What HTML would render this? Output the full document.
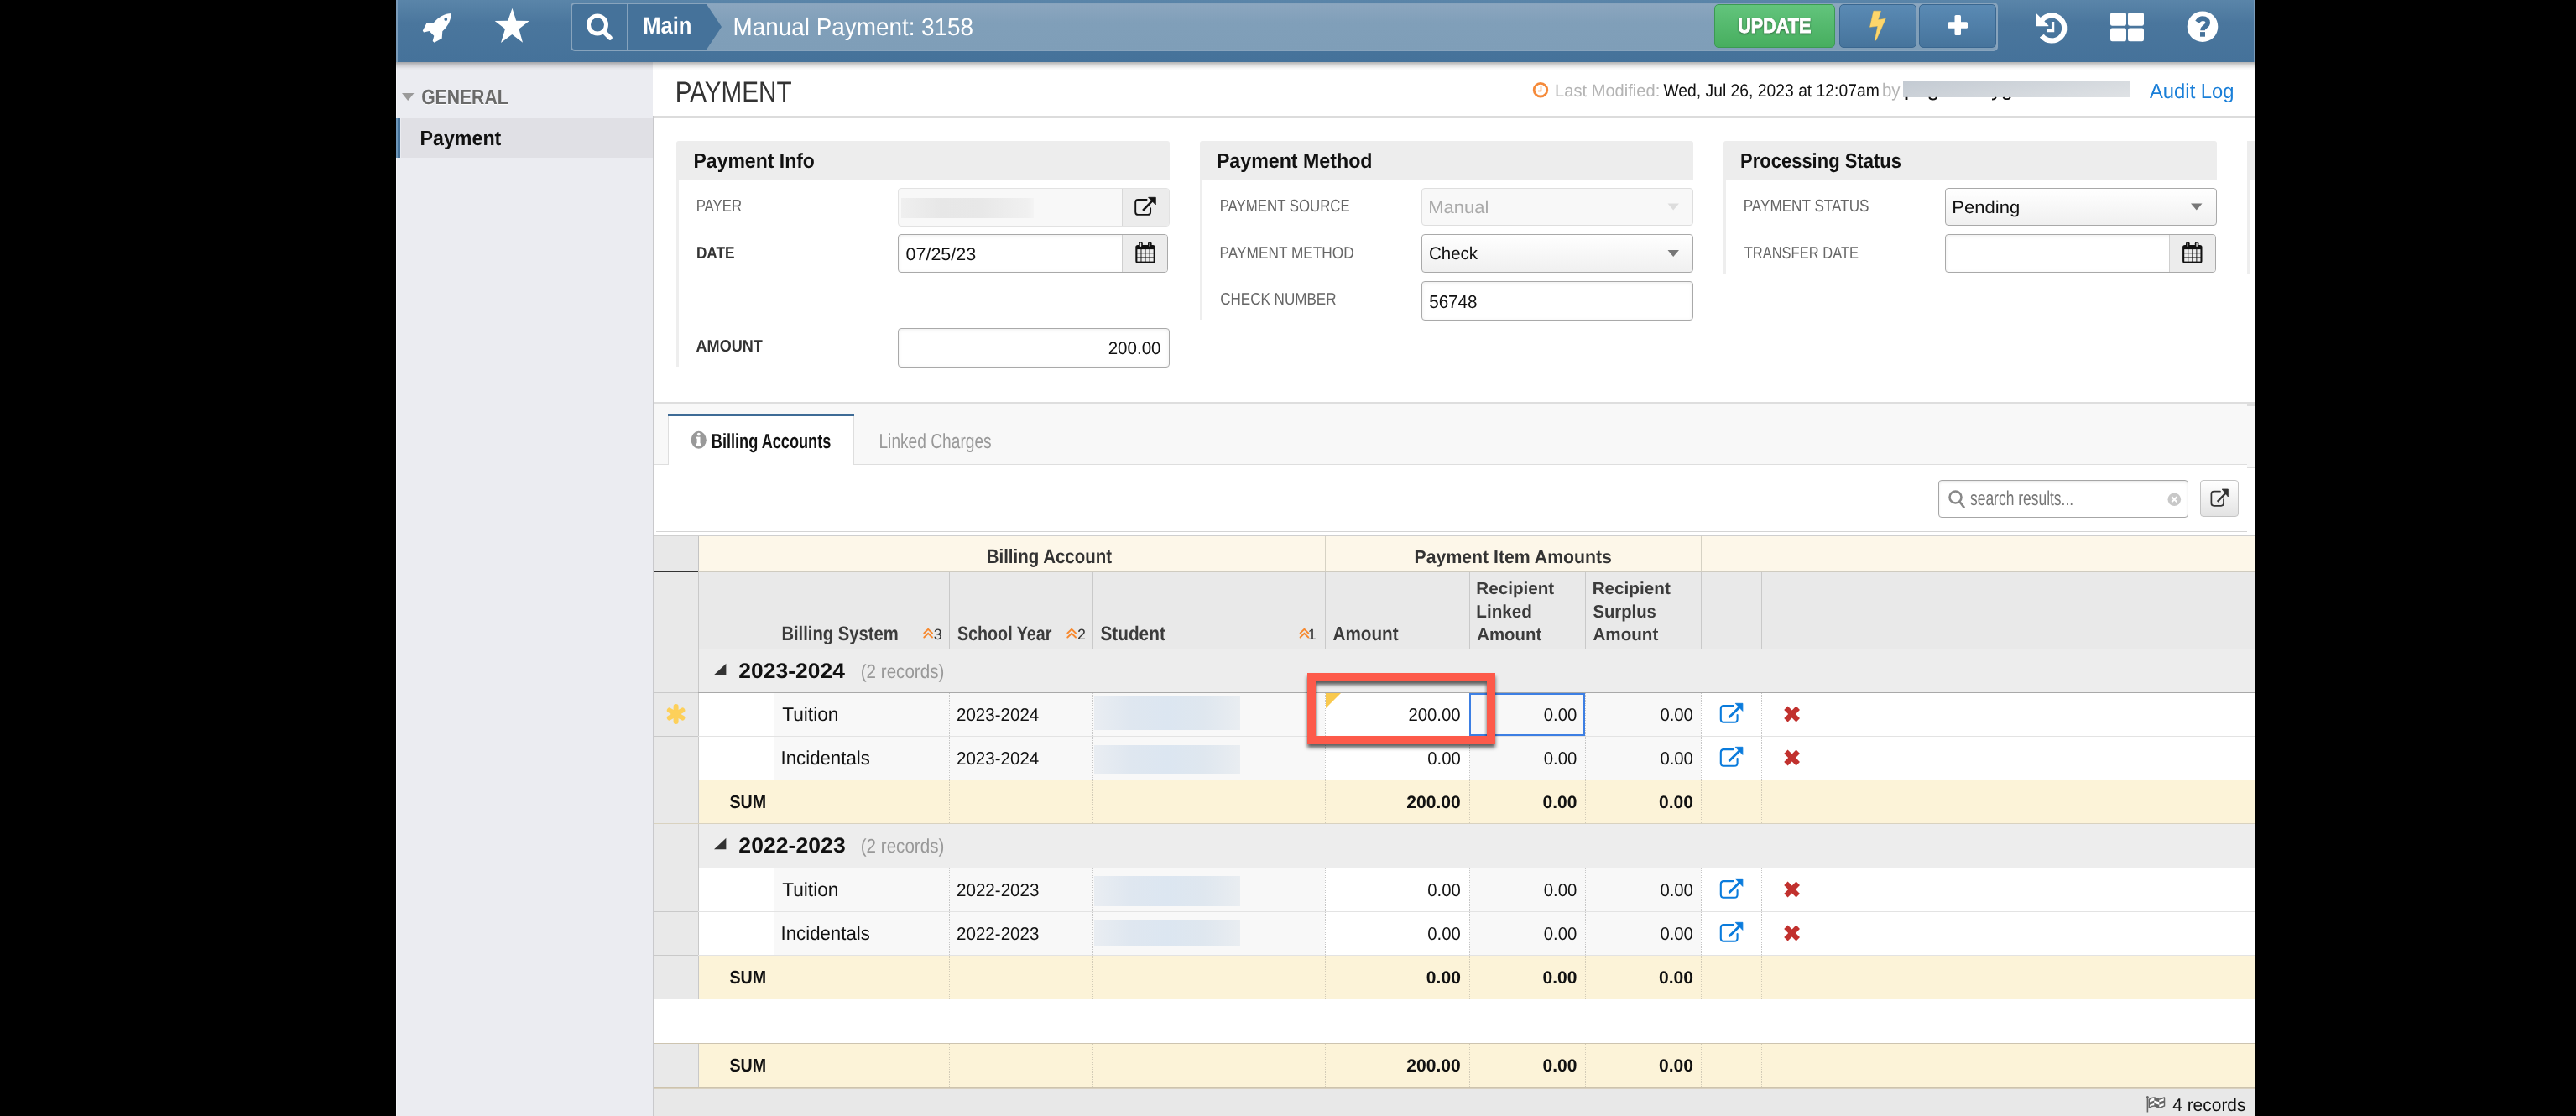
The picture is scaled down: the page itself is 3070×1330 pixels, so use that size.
<!DOCTYPE html>
<html><head><meta charset="utf-8">
<style>
html,body{margin:0;padding:0;}
body{width:3070px;height:1330px;background:#000;position:relative;overflow:hidden;font-family:"Liberation Sans",sans-serif;}
.a{position:absolute;box-sizing:border-box;}
svg{position:absolute;left:0;top:0;will-change:transform;}
text{font-family:"Liberation Sans",sans-serif;white-space:pre;text-rendering:geometricPrecision;}
</style></head><body>
<div class="a" style="left:472px;top:0px;width:2216px;height:1330px;background:#fff;"></div>
<div class="a" style="left:472px;top:74px;width:306px;height:1256px;background:#ebecf1;"></div>
<div class="a" style="left:778px;top:138px;width:1px;height:1192px;background:#c9c9cc;"></div>
<div class="a" style="left:472px;top:141px;width:306px;height:47px;background:#e0e0e5;"></div>
<div class="a" style="left:472px;top:74px;width:1px;height:1256px;background:#f6f6f9;"></div>
<div class="a" style="left:472px;top:141px;width:5px;height:47px;background:linear-gradient(90deg,#7098bb 0,#6a93b6 2px,#45729a 2px);"></div>
<div class="a" style="left:477px;top:141px;width:1px;height:47px;background:#ebecf1;"></div>
<div class="a" style="left:472px;top:0px;width:2216px;height:74px;background:linear-gradient(#5a85a9 0px,#4a769d 28px,#45729a 74px);"></div>
<div class="a" style="left:472px;top:0px;width:2px;height:74px;background:#7b9cba;"></div>
<div class="a" style="left:2686px;top:0px;width:2px;height:74px;background:#7b9cba;"></div>
<div class="a" style="left:472px;top:74px;width:2216px;height:10px;background:linear-gradient(rgba(0,0,0,0.30),rgba(0,0,0,0.13) 40%,rgba(0,0,0,0.03) 75%,rgba(0,0,0,0));"></div>
<div class="a" style="left:680px;top:3px;width:1701px;height:58px;background:linear-gradient(#8ba6bf 0px,#809fb9 22px,#7f9eb8 58px);border:2px solid #88a4bd;border-radius:5px;"></div>
<div class="a" style="left:682px;top:5px;width:65px;height:54px;background:#45729a;border-radius:3px 0 0 3px;"></div>
<div class="a" style="left:747px;top:5px;width:1px;height:54px;background:#86a3bd;"></div>
<div class="a" style="left:2043px;top:5px;width:144px;height:52px;background:linear-gradient(#62c47c,#47ae5f);border:1px solid #3b9a52;border-radius:5px;"></div>
<div class="a" style="left:2192px;top:5px;width:92px;height:52px;background:linear-gradient(#5a8ab4,#46749c);border:1px solid #3a6790;border-radius:5px;"></div>
<div class="a" style="left:2287px;top:5px;width:92px;height:52px;background:linear-gradient(#5a8ab4,#46749c);border:1px solid #3a6790;border-radius:5px;"></div>
<div class="a" style="left:779px;top:138px;width:1909px;height:3px;background:#dcdcdc;"></div>
<div class="a" style="left:2268px;top:96px;width:270px;height:20px;background:linear-gradient(170deg,#c3cad2,#dfe2e5);"></div>
<div class="a" style="left:806px;top:168px;width:588px;height:47px;background:#ededed;border-radius:3px 3px 0 0;"></div>
<div class="a" style="left:806px;top:215px;width:3px;height:222px;background:#eeeeee;"></div>
<div class="a" style="left:1430px;top:168px;width:588px;height:47px;background:#ededed;border-radius:3px 3px 0 0;"></div>
<div class="a" style="left:1430px;top:215px;width:3px;height:166px;background:#eeeeee;"></div>
<div class="a" style="left:2054px;top:168px;width:588px;height:47px;background:#ededed;border-radius:3px 3px 0 0;"></div>
<div class="a" style="left:2054px;top:215px;width:3px;height:111px;background:#eeeeee;"></div>
<div class="a" style="left:2678px;top:168px;width:10px;height:47px;background:#ededed;"></div>
<div class="a" style="left:2678px;top:215px;width:3px;height:111px;background:#eeeeee;"></div>
<div class="a" style="left:1070px;top:224px;width:324px;height:46px;background:#f8f8f8;border:1px solid #e2e2e2;border-radius:4px;"></div>
<div class="a" style="left:1337px;top:225px;width:56px;height:44px;background:#ececec;border-left:1px solid #d8d8d8;border-radius:0 3px 3px 0;"></div>
<div class="a" style="left:1074px;top:236px;width:158px;height:24px;background:linear-gradient(90deg,#efefef,#e7e7e7 30%,#e8e8e8 60%,#f0f0f0 95%,#f4f4f4);"></div>
<div class="a" style="left:1070px;top:279px;width:322px;height:46px;background:#fff;border:1px solid #a9a9a9;border-radius:4px;box-shadow:inset 0 1px 4px rgba(0,0,0,0.075);"></div>
<div class="a" style="left:1337px;top:280px;width:54px;height:44px;background:#ececec;border-left:1px solid #cfcfcf;border-radius:0 3px 3px 0;"></div>
<div class="a" style="left:1070px;top:391px;width:324px;height:47px;background:#fff;border:1px solid #a9a9a9;border-radius:4px;box-shadow:inset 0 1px 4px rgba(0,0,0,0.075);"></div>
<div class="a" style="left:1694px;top:224px;width:324px;height:45px;background:#f8f8f8;border:1px solid #dedede;border-radius:4px;"></div>
<div class="a" style="left:1694px;top:279px;width:324px;height:46px;background:linear-gradient(#fff,#f0f0f0);border:1px solid #a9a9a9;border-radius:4px;"></div>
<div class="a" style="left:1694px;top:335px;width:324px;height:47px;background:#fff;border:1px solid #a9a9a9;border-radius:4px;box-shadow:inset 0 1px 4px rgba(0,0,0,0.075);"></div>
<div class="a" style="left:2318px;top:224px;width:324px;height:45px;background:linear-gradient(#fff,#f0f0f0);border:1px solid #a9a9a9;border-radius:4px;"></div>
<div class="a" style="left:2318px;top:279px;width:323px;height:46px;background:#fff;border:1px solid #a9a9a9;border-radius:4px;box-shadow:inset 0 1px 4px rgba(0,0,0,0.075);"></div>
<div class="a" style="left:2585px;top:280px;width:55px;height:44px;background:#ececec;border-left:1px solid #cfcfcf;border-radius:0 3px 3px 0;"></div>
<div class="a" style="left:779px;top:479px;width:1909px;height:3px;background:#dedede;"></div>
<div class="a" style="left:779px;top:482px;width:1909px;height:72px;background:#f8f8f8;"></div>
<div class="a" style="left:779px;top:553px;width:1899px;height:1px;background:#dedede;"></div>
<div class="a" style="left:2678px;top:479px;width:10px;height:5px;background:#dedede;"></div>
<div class="a" style="left:2678px;top:484px;width:10px;height:73px;background:#f8f8f8;"></div>
<div class="a" style="left:2678px;top:557px;width:10px;height:1px;background:#dedede;"></div>
<div class="a" style="left:796px;top:493px;width:222px;height:61px;background:#fff;border-left:1px solid #dedede;border-right:1px solid #dedede;"></div>
<div class="a" style="left:796px;top:493px;width:222px;height:3px;background:#3e6b96;"></div>
<div class="a" style="left:2310px;top:572px;width:298px;height:45px;background:#fff;border:1px solid #a6a6a6;border-radius:4px;box-shadow:inset 0 2px 3px rgba(0,0,0,0.08);"></div>
<div class="a" style="left:2622px;top:572px;width:46px;height:44px;background:linear-gradient(#fff,#e3e3e3);border:1px solid #c4c4c4;border-radius:4px;"></div>
<div class="a" style="left:782px;top:633px;width:1896px;height:1px;background:#d4d4d4;"></div>
<div class="a" style="left:779px;top:638px;width:1909px;height:1px;background:#cfcfcf;"></div>
<div class="a" style="left:779px;top:639px;width:53px;height:43px;background:#e8e8e8;"></div>
<div class="a" style="left:833px;top:639px;width:1855px;height:42px;background:#fdf7e9;"></div>
<div class="a" style="left:832px;top:639px;width:1px;height:42px;background:#c4c4c4;"></div>
<div class="a" style="left:922px;top:639px;width:1px;height:42px;background:#d6d2c4;"></div>
<div class="a" style="left:1579px;top:639px;width:1px;height:42px;background:#d6d2c4;"></div>
<div class="a" style="left:2027px;top:639px;width:1px;height:42px;background:#d6d2c4;"></div>
<div class="a" style="left:779px;top:681px;width:53px;height:1px;background:#333;"></div>
<div class="a" style="left:832px;top:681px;width:1856px;height:1px;background:#cfcbbf;"></div>
<div class="a" style="left:779px;top:682px;width:1909px;height:91px;background:#e9e9e9;"></div>
<div class="a" style="left:832px;top:682px;width:1px;height:91px;background:#c9c9c9;"></div>
<div class="a" style="left:922px;top:682px;width:1px;height:91px;background:#c9c9c9;"></div>
<div class="a" style="left:1131px;top:682px;width:1px;height:91px;background:#c9c9c9;"></div>
<div class="a" style="left:1302px;top:682px;width:1px;height:91px;background:#c9c9c9;"></div>
<div class="a" style="left:1579px;top:682px;width:1px;height:91px;background:#c9c9c9;"></div>
<div class="a" style="left:1751px;top:682px;width:1px;height:91px;background:#c9c9c9;"></div>
<div class="a" style="left:1889px;top:682px;width:1px;height:91px;background:#c9c9c9;"></div>
<div class="a" style="left:2027px;top:682px;width:1px;height:91px;background:#c9c9c9;"></div>
<div class="a" style="left:2099px;top:682px;width:1px;height:91px;background:#c9c9c9;"></div>
<div class="a" style="left:2171px;top:682px;width:1px;height:91px;background:#c9c9c9;"></div>
<div class="a" style="left:779px;top:773px;width:1909px;height:1px;background:#3c3c3c;"></div>
<div class="a" style="left:779px;top:774px;width:1909px;height:51px;background:#ededed;"></div>
<div class="a" style="left:779px;top:774px;width:53px;height:51px;background:#e9e9e9;"></div>
<div class="a" style="left:832px;top:774px;width:1px;height:51px;background:#c9c9c9;"></div>
<div class="a" style="left:779px;top:825px;width:1909px;height:1px;background:#a9a9a9;"></div>
<div class="a" style="left:779px;top:825px;width:53px;height:1px;background:#c9c9c9;"></div>
<div class="a" style="left:779px;top:826px;width:53px;height:51px;background:#e9e9e9;"></div>
<div class="a" style="left:832px;top:826px;width:1px;height:51px;background:#c9c9c9;"></div>
<div class="a" style="left:833px;top:826px;width:89px;height:51px;background:#fff;"></div>
<div class="a" style="left:922px;top:826px;width:657px;height:51px;background:#f8f8f8;"></div>
<div class="a" style="left:1579px;top:826px;width:172px;height:51px;background:#fff;"></div>
<div class="a" style="left:1751px;top:826px;width:276px;height:51px;background:#f8f8f8;"></div>
<div class="a" style="left:2027px;top:826px;width:661px;height:51px;background:#fff;"></div>
<div class="a" style="left:779px;top:877px;width:1909px;height:1px;background:#e3e3e3;"></div>
<div class="a" style="left:779px;top:877px;width:53px;height:1px;background:#c9c9c9;"></div>
<div class="a" style="left:1304px;top:830px;width:174px;height:40px;background:linear-gradient(90deg,#e9edf2,#dfe7f0 25%,#dce6f1 50%,#dfe7ef 75%,#e9edf1);"></div>
<div class="a" style="left:779px;top:878px;width:53px;height:51px;background:#e9e9e9;"></div>
<div class="a" style="left:832px;top:878px;width:1px;height:51px;background:#c9c9c9;"></div>
<div class="a" style="left:833px;top:878px;width:89px;height:51px;background:#fff;"></div>
<div class="a" style="left:922px;top:878px;width:657px;height:51px;background:#f8f8f8;"></div>
<div class="a" style="left:1579px;top:878px;width:172px;height:51px;background:#fff;"></div>
<div class="a" style="left:1751px;top:878px;width:276px;height:51px;background:#f8f8f8;"></div>
<div class="a" style="left:2027px;top:878px;width:661px;height:51px;background:#fff;"></div>
<div class="a" style="left:779px;top:929px;width:1909px;height:1px;background:#e3e3e3;"></div>
<div class="a" style="left:779px;top:929px;width:53px;height:1px;background:#c9c9c9;"></div>
<div class="a" style="left:1304px;top:888px;width:174px;height:34px;background:linear-gradient(90deg,#e9edf2,#dfe7f0 25%,#dce6f1 50%,#dfe7ef 75%,#e9edf1);"></div>
<div class="a" style="left:779px;top:930px;width:53px;height:51px;background:#e9e9e9;"></div>
<div class="a" style="left:832px;top:930px;width:1px;height:51px;background:#c9c9c9;"></div>
<div class="a" style="left:833px;top:930px;width:1855px;height:51px;background:#fcf3d8;"></div>
<div class="a" style="left:779px;top:981px;width:1909px;height:1px;background:#d9d2bf;"></div>
<div class="a" style="left:779px;top:982px;width:1909px;height:52px;background:#ededed;"></div>
<div class="a" style="left:779px;top:982px;width:53px;height:52px;background:#e9e9e9;"></div>
<div class="a" style="left:832px;top:982px;width:1px;height:52px;background:#c9c9c9;"></div>
<div class="a" style="left:779px;top:1034px;width:1909px;height:1px;background:#a9a9a9;"></div>
<div class="a" style="left:779px;top:1034px;width:53px;height:1px;background:#c9c9c9;"></div>
<div class="a" style="left:779px;top:1035px;width:53px;height:51px;background:#e9e9e9;"></div>
<div class="a" style="left:832px;top:1035px;width:1px;height:51px;background:#c9c9c9;"></div>
<div class="a" style="left:833px;top:1035px;width:89px;height:51px;background:#fff;"></div>
<div class="a" style="left:922px;top:1035px;width:657px;height:51px;background:#f8f8f8;"></div>
<div class="a" style="left:1579px;top:1035px;width:172px;height:51px;background:#fff;"></div>
<div class="a" style="left:1751px;top:1035px;width:276px;height:51px;background:#f8f8f8;"></div>
<div class="a" style="left:2027px;top:1035px;width:661px;height:51px;background:#fff;"></div>
<div class="a" style="left:779px;top:1086px;width:1909px;height:1px;background:#e3e3e3;"></div>
<div class="a" style="left:779px;top:1086px;width:53px;height:1px;background:#c9c9c9;"></div>
<div class="a" style="left:1304px;top:1044px;width:174px;height:36px;background:linear-gradient(90deg,#e9edf2,#dfe7f0 25%,#dce6f1 50%,#dfe7ef 75%,#e9edf1);"></div>
<div class="a" style="left:779px;top:1087px;width:53px;height:51px;background:#e9e9e9;"></div>
<div class="a" style="left:832px;top:1087px;width:1px;height:51px;background:#c9c9c9;"></div>
<div class="a" style="left:833px;top:1087px;width:89px;height:51px;background:#fff;"></div>
<div class="a" style="left:922px;top:1087px;width:657px;height:51px;background:#f8f8f8;"></div>
<div class="a" style="left:1579px;top:1087px;width:172px;height:51px;background:#fff;"></div>
<div class="a" style="left:1751px;top:1087px;width:276px;height:51px;background:#f8f8f8;"></div>
<div class="a" style="left:2027px;top:1087px;width:661px;height:51px;background:#fff;"></div>
<div class="a" style="left:779px;top:1138px;width:1909px;height:1px;background:#e3e3e3;"></div>
<div class="a" style="left:779px;top:1138px;width:53px;height:1px;background:#c9c9c9;"></div>
<div class="a" style="left:1304px;top:1096px;width:174px;height:31px;background:linear-gradient(90deg,#e9edf2,#dfe7f0 25%,#dce6f1 50%,#dfe7ef 75%,#e9edf1);"></div>
<div class="a" style="left:779px;top:1139px;width:53px;height:51px;background:#e9e9e9;"></div>
<div class="a" style="left:832px;top:1139px;width:1px;height:51px;background:#c9c9c9;"></div>
<div class="a" style="left:833px;top:1139px;width:1855px;height:51px;background:#fcf3d8;"></div>
<div class="a" style="left:779px;top:1190px;width:1909px;height:1px;background:#d9d2bf;"></div>
<div class="a" style="left:779px;top:1191px;width:1909px;height:52px;background:#fff;"></div>
<div class="a" style="left:779px;top:1243px;width:1909px;height:1px;background:#cdc4b0;"></div>
<div class="a" style="left:779px;top:1244px;width:53px;height:52px;background:#e9e9e9;"></div>
<div class="a" style="left:832px;top:1244px;width:1px;height:52px;background:#c9c9c9;"></div>
<div class="a" style="left:833px;top:1244px;width:1855px;height:52px;background:#fcf3d8;"></div>
<div class="a" style="left:779px;top:1296px;width:1909px;height:1px;background:#d9d2bf;"></div>
<div class="a" style="left:779px;top:1296px;width:1909px;height:1px;background:#cdc3ad;"></div>
<div class="a" style="left:779px;top:1297px;width:1909px;height:1px;background:#d8d0bf;"></div>
<div class="a" style="left:779px;top:1298px;width:1909px;height:32px;background:#e8e8e8;"></div>
<svg width="3070" height="1330" viewBox="0 0 3070 1330">
<polygon points="748,5 842,5 860,32 842,59 748,59" fill="#45729a"/>
<path d="M538,16 C530,16 523,20 517,27 L508.5,27.6 L503.8,36.4 L505,38.6 L511.6,37 L517.3,42.7 L515.7,48.9 L517.6,50.8 L526.7,45.8 L527.3,37.3 C533,32 537,26 538,16 Z" fill="#fff"/>
<circle cx="531.3" cy="23.1" r="1.9" fill="#45729a"/>
<polygon points="610.5,9.7 615.2,24.8 630.8,25 618.5,34.4 623,50.8 610.3,41 597,51.1 602,34.4 589.7,25 605.3,24.8" fill="#fff"/>
<circle cx="712" cy="29.5" r="10.5" fill="none" stroke="#fff" stroke-width="5"/>
<line x1="720" y1="38" x2="727" y2="45" stroke="#fff" stroke-width="5.5" stroke-linecap="round"/>
<polygon points="2232.8,13.2 2241.5,13.2 2238.2,23.7 2247.3,22.2 2235.9,48.0 2234.3,48.3 2237.8,31.1 2228.5,32.3" fill="#fdd66b" stroke="#fdd66b" stroke-width="0.6" stroke-linejoin="round" style="filter:drop-shadow(0.6px 0.8px 0.6px rgba(0,0,0,0.35))"/>
<rect x="2329.5" y="18" width="7.5" height="24" rx="1.5" fill="#fff"/>
<rect x="2321.5" y="26.2" width="23.5" height="7.5" rx="1.5" fill="#fff"/>
<path d="M2431.6,27.2 A15,15 0 1 1 2433.3,42.6" fill="none" stroke="#fff" stroke-width="6.2"/>
<polygon points="2426.9,16.8 2426.9,30.7 2440.8,30.7" fill="#fff" stroke="#fff" stroke-width="1.2" stroke-linejoin="round"/>
<polyline points="2446.6,25.9 2446.6,36.5 2439,36.5" fill="none" stroke="#fff" stroke-width="3.3"/>
<rect x="2515" y="15" width="19" height="15.7" rx="2.2" fill="#fff"/>
<rect x="2536" y="15" width="19" height="15.7" rx="2.2" fill="#fff"/>
<rect x="2515" y="33.5" width="19" height="15.7" rx="2.2" fill="#fff"/>
<rect x="2536" y="33.5" width="19" height="15.7" rx="2.2" fill="#fff"/>
<circle cx="2625" cy="31.7" r="18.3" fill="#fff"/>
<path d="M2618.6,26.3 C2620.5,23.5 2622.5,22.1 2625.2,22.1 C2628.8,22.1 2631.2,24 2631.2,27 C2631.2,30 2628.5,31.2 2627,32.5 C2625.5,33.7 2625,34.5 2625,36.2" fill="none" stroke="#45729a" stroke-width="5.6"/>
<rect x="2622" y="38.1" width="6" height="5.6" fill="#45729a"/>
<text x="766.13" y="40.40" font-size="28.12" font-weight="bold" fill="#fff" textLength="58.38" lengthAdjust="spacingAndGlyphs" >Main</text>
<text x="873.57" y="42.00" font-size="29.13" font-weight="normal" fill="#fff" textLength="286.53" lengthAdjust="spacingAndGlyphs" >Manual Payment: 3158</text>
<text x="2071.21" y="39.30" font-size="24.64" font-weight="bold" fill="#fff" textLength="87.10" lengthAdjust="spacingAndGlyphs" stroke="#fff" stroke-width="0.9" style="filter:drop-shadow(0 1px 1px rgba(0,0,0,0.45))">UPDATE</text>
<polygon points="479,111 493.5,111 486.2,120" fill="#9a9a9a"/>
<text x="502.15" y="124.00" font-size="24.64" font-weight="bold" fill="#6a6a6a" textLength="103.47" lengthAdjust="spacingAndGlyphs" style="filter:drop-shadow(0 1.5px 0 #fff)">GENERAL</text>
<text x="500.49" y="173.00" font-size="24.64" font-weight="bold" fill="#111" textLength="96.83" lengthAdjust="spacingAndGlyphs" >Payment</text>
<text x="804.63" y="120.50" font-size="34.06" font-weight="normal" fill="#333" textLength="138.99" lengthAdjust="spacingAndGlyphs" >PAYMENT</text>
<circle cx="1836" cy="107.2" r="7.8" fill="none" stroke="#f58a3a" stroke-width="2.8"/>
<polyline points="1836.5,102.5 1836.5,108.5 1833,108.5" fill="none" stroke="#f58a3a" stroke-width="1.5"/>
<text x="1853.09" y="115.00" font-size="20.87" font-weight="normal" fill="#b4b4b4" textLength="125.23" lengthAdjust="spacingAndGlyphs" >Last Modified:</text>
<text x="1982.50" y="115.00" font-size="21.30" font-weight="normal" fill="#111" textLength="257.23" lengthAdjust="spacingAndGlyphs" >Wed, Jul 26, 2023 at 12:07am</text>
<line x1="1982" y1="121.5" x2="2238" y2="121.5" stroke="#999" stroke-width="1" stroke-dasharray="1.5,1.5"/>
<text x="2242.97" y="115.10" font-size="22.32" font-weight="normal" fill="#b4b4b4" textLength="21.66" lengthAdjust="spacingAndGlyphs" >by</text>
<rect x="2270.6" y="115.8" width="2.8" height="3.2" fill="#111"/>
<path d="M2299.5,115.8 Q2299.5,118.6 2303.6,118.6 Q2307.8,118.6 2307.8,115.8" fill="none" stroke="#111" stroke-width="2"/>
<path d="M2378.6,115.8 Q2378,118.6 2374,118.6" fill="none" stroke="#111" stroke-width="2"/>
<path d="M2387.5,115.8 Q2388.5,118.2 2391.5,118.2 Q2394.8,118.2 2395.8,115.8" fill="none" stroke="#111" stroke-width="1.8"/>
<text x="2562.00" y="116.50" font-size="24.64" font-weight="normal" fill="#1a7fd8" textLength="100.56" lengthAdjust="spacingAndGlyphs" >Audit Log</text>
<text x="826.51" y="200.00" font-size="24.64" font-weight="bold" fill="#111" textLength="144.39" lengthAdjust="spacingAndGlyphs" >Payment Info</text>
<text x="1449.89" y="200.00" font-size="24.64" font-weight="bold" fill="#111" textLength="185.65" lengthAdjust="spacingAndGlyphs" >Payment Method</text>
<text x="2074.07" y="200.00" font-size="24.64" font-weight="bold" fill="#111" textLength="191.82" lengthAdjust="spacingAndGlyphs" >Processing Status</text>
<text x="829.66" y="252.00" font-size="20.29" font-weight="normal" fill="#666" textLength="54.43" lengthAdjust="spacingAndGlyphs" >PAYER</text>
<text x="829.88" y="307.50" font-size="20.14" font-weight="bold" fill="#333" textLength="45.78" lengthAdjust="spacingAndGlyphs" >DATE</text>
<text x="829.55" y="419.40" font-size="20.14" font-weight="bold" fill="#333" textLength="79.29" lengthAdjust="spacingAndGlyphs" >AMOUNT</text>
<text x="1453.65" y="252.00" font-size="20.29" font-weight="normal" fill="#666" textLength="155.08" lengthAdjust="spacingAndGlyphs" >PAYMENT SOURCE</text>
<text x="1453.62" y="307.50" font-size="20.14" font-weight="normal" fill="#666" textLength="160.02" lengthAdjust="spacingAndGlyphs" >PAYMENT METHOD</text>
<text x="1454.15" y="363.30" font-size="20.14" font-weight="normal" fill="#666" textLength="138.36" lengthAdjust="spacingAndGlyphs" >CHECK NUMBER</text>
<text x="2077.63" y="252.00" font-size="20.29" font-weight="normal" fill="#666" textLength="149.88" lengthAdjust="spacingAndGlyphs" >PAYMENT STATUS</text>
<text x="2078.67" y="307.50" font-size="20.14" font-weight="normal" fill="#666" textLength="136.39" lengthAdjust="spacingAndGlyphs" >TRANSFER DATE</text>
<text x="1079.54" y="309.80" font-size="21.14" font-weight="normal" fill="#111" textLength="83.68" lengthAdjust="spacingAndGlyphs" >07/25/23</text>
<text x="1320.67" y="421.70" font-size="21.00" font-weight="normal" fill="#111" textLength="62.82" lengthAdjust="spacingAndGlyphs" >200.00</text>
<text x="1702.24" y="254.00" font-size="21.01" font-weight="normal" fill="#aaa" textLength="72.19" lengthAdjust="spacingAndGlyphs" >Manual</text>
<polygon points="1987.5,242.5 2001,242.5 1994.2,250.5" fill="#ddd"/>
<text x="1702.98" y="309.00" font-size="21.01" font-weight="normal" fill="#111" textLength="58.01" lengthAdjust="spacingAndGlyphs" >Check</text>
<polygon points="1987.5,298 2001,298 1994.2,306" fill="#777"/>
<text x="1703.17" y="366.70" font-size="21.71" font-weight="normal" fill="#111" textLength="57.37" lengthAdjust="spacingAndGlyphs" >56748</text>
<text x="2326.23" y="254.00" font-size="21.01" font-weight="normal" fill="#111" textLength="81.00" lengthAdjust="spacingAndGlyphs" >Pending</text>
<polygon points="2611,242.5 2624.5,242.5 2617.8,250.5" fill="#777"/>
<path d="M1366.6,238 L1356.4,238 Q1353.2,238 1353.2,241.2 L1353.2,252.70000000000002 Q1353.2,255.9 1356.4,255.9 L1367.8999999999999,255.9 Q1371.1,255.9 1371.1,252.70000000000002 L1371.1,248.2" fill="none" stroke="#111" stroke-width="1.9" stroke-linecap="round"/>
<line x1="1363" y1="250" x2="1372.3" y2="240.3" stroke="#111" stroke-width="2.6" stroke-linecap="square"/>
<polygon points="1368.6,235.3 1377.3,235.3 1377.3,244" fill="#111" stroke="#111" stroke-width="0.8" stroke-linejoin="round"/>
<rect x="1353.3" y="292" width="23.4" height="21.6" rx="2.6" fill="#111"/>
<rect x="1355.40" y="297.10" width="4.1" height="4.2" fill="#ececec"/>
<rect x="1355.40" y="302.25" width="4.1" height="4.2" fill="#ececec"/>
<rect x="1355.40" y="307.40" width="4.1" height="4.2" fill="#ececec"/>
<rect x="1360.45" y="297.10" width="4.1" height="4.2" fill="#ececec"/>
<rect x="1360.45" y="302.25" width="4.1" height="4.2" fill="#ececec"/>
<rect x="1360.45" y="307.40" width="4.1" height="4.2" fill="#ececec"/>
<rect x="1365.50" y="297.10" width="4.1" height="4.2" fill="#ececec"/>
<rect x="1365.50" y="302.25" width="4.1" height="4.2" fill="#ececec"/>
<rect x="1365.50" y="307.40" width="4.1" height="4.2" fill="#ececec"/>
<rect x="1370.55" y="297.10" width="4.1" height="4.2" fill="#ececec"/>
<rect x="1370.55" y="302.25" width="4.1" height="4.2" fill="#ececec"/>
<rect x="1370.55" y="307.40" width="4.1" height="4.2" fill="#ececec"/>
<rect x="1357.20" y="288" width="4.6" height="7.6" rx="2.3" fill="#111"/>
<rect x="1358.80" y="289.4" width="1.4" height="4.6" rx="0.7" fill="#ececec"/>
<rect x="1368.00" y="288" width="4.6" height="7.6" rx="2.3" fill="#111"/>
<rect x="1369.60" y="289.4" width="1.4" height="4.6" rx="0.7" fill="#ececec"/>
<rect x="2601.1" y="292" width="23.4" height="21.6" rx="2.6" fill="#111"/>
<rect x="2603.20" y="297.10" width="4.1" height="4.2" fill="#ececec"/>
<rect x="2603.20" y="302.25" width="4.1" height="4.2" fill="#ececec"/>
<rect x="2603.20" y="307.40" width="4.1" height="4.2" fill="#ececec"/>
<rect x="2608.25" y="297.10" width="4.1" height="4.2" fill="#ececec"/>
<rect x="2608.25" y="302.25" width="4.1" height="4.2" fill="#ececec"/>
<rect x="2608.25" y="307.40" width="4.1" height="4.2" fill="#ececec"/>
<rect x="2613.30" y="297.10" width="4.1" height="4.2" fill="#ececec"/>
<rect x="2613.30" y="302.25" width="4.1" height="4.2" fill="#ececec"/>
<rect x="2613.30" y="307.40" width="4.1" height="4.2" fill="#ececec"/>
<rect x="2618.35" y="297.10" width="4.1" height="4.2" fill="#ececec"/>
<rect x="2618.35" y="302.25" width="4.1" height="4.2" fill="#ececec"/>
<rect x="2618.35" y="307.40" width="4.1" height="4.2" fill="#ececec"/>
<rect x="2605.00" y="288" width="4.6" height="7.6" rx="2.3" fill="#111"/>
<rect x="2606.60" y="289.4" width="1.4" height="4.6" rx="0.7" fill="#ececec"/>
<rect x="2615.80" y="288" width="4.6" height="7.6" rx="2.3" fill="#111"/>
<rect x="2617.40" y="289.4" width="1.4" height="4.6" rx="0.7" fill="#ececec"/>
<ellipse cx="832.7" cy="524.3" rx="9.1" ry="10.45" fill="#999"/>
<circle cx="832.8" cy="517.6" r="1.9" fill="#fff"/><rect x="830.6" y="520.7" width="3.9" height="9" fill="#fff"/><rect x="829.8" y="528.3" width="6" height="3.3" fill="#fff"/><rect x="829.6" y="520.7" width="2" height="2" fill="#fff"/>
<text x="847.82" y="533.50" font-size="24.49" font-weight="bold" fill="#111" textLength="142.55" lengthAdjust="spacingAndGlyphs" >Billing Accounts</text>
<text x="1047.47" y="533.50" font-size="24.49" font-weight="normal" fill="#999" textLength="134.20" lengthAdjust="spacingAndGlyphs" >Linked Charges</text>
<circle cx="2330.5" cy="592.5" r="7" fill="none" stroke="#888" stroke-width="2.6"/>
<line x1="2335.5" y1="598" x2="2340.5" y2="604.5" stroke="#888" stroke-width="2.8" stroke-linecap="round"/>
<text x="2347.98" y="602.20" font-size="24.20" font-weight="normal" fill="#777" textLength="123.15" lengthAdjust="spacingAndGlyphs" >search results...</text>
<circle cx="2591.3" cy="595.3" r="7.8" fill="#c8c8c8"/>
<path d="M2588.3,592.3 L2594.3,598.3 M2594.3,592.3 L2588.3,598.3" stroke="#fff" stroke-width="2"/>
<path d="M2646,585.7 L2638.4,585.7 Q2635.4,585.7 2635.4,588.7 L2635.4,599.8 Q2635.4,602.8 2638.4,602.8 L2647,602.8 Q2650,602.8 2650,599.8 L2650,595.1" fill="none" stroke="#333" stroke-width="1.7" stroke-linecap="round"/>
<line x1="2643.5" y1="597" x2="2653.2" y2="587" stroke="#333" stroke-width="2.3" stroke-linecap="square"/>
<polygon points="2648.2,583 2655.4,583 2655.4,592" fill="#333" stroke="#333" stroke-width="0.8" stroke-linejoin="round"/>
<text x="1175.67" y="671.00" font-size="23.48" font-weight="bold" fill="#333" textLength="149.36" lengthAdjust="spacingAndGlyphs" >Billing Account</text>
<text x="1685.62" y="671.00" font-size="21.74" font-weight="bold" fill="#333" textLength="235.26" lengthAdjust="spacingAndGlyphs" >Payment Item Amounts</text>
<text x="931.38" y="763.40" font-size="23.77" font-weight="bold" fill="#3b3b3b" textLength="139.44" lengthAdjust="spacingAndGlyphs" >Billing System</text>
<text x="1140.91" y="763.40" font-size="23.77" font-weight="bold" fill="#3b3b3b" textLength="112.52" lengthAdjust="spacingAndGlyphs" >School Year</text>
<text x="1311.38" y="763.40" font-size="23.77" font-weight="bold" fill="#3b3b3b" textLength="77.47" lengthAdjust="spacingAndGlyphs" >Student</text>
<text x="1588.48" y="763.00" font-size="23.19" font-weight="bold" fill="#3b3b3b" textLength="78.06" lengthAdjust="spacingAndGlyphs" >Amount</text>
<text x="1759.36" y="708.00" font-size="20.29" font-weight="bold" fill="#3b3b3b" textLength="92.87" lengthAdjust="spacingAndGlyphs" >Recipient</text>
<text x="1759.36" y="735.50" font-size="21.59" font-weight="bold" fill="#3b3b3b" textLength="66.64" lengthAdjust="spacingAndGlyphs" >Linked</text>
<text x="1760.19" y="763.00" font-size="21.01" font-weight="bold" fill="#3b3b3b" textLength="77.05" lengthAdjust="spacingAndGlyphs" >Amount</text>
<text x="1897.65" y="708.00" font-size="20.29" font-weight="bold" fill="#3b3b3b" textLength="93.18" lengthAdjust="spacingAndGlyphs" >Recipient</text>
<text x="1898.39" y="735.50" font-size="21.59" font-weight="bold" fill="#3b3b3b" textLength="75.47" lengthAdjust="spacingAndGlyphs" >Surplus</text>
<text x="1898.49" y="763.00" font-size="21.01" font-weight="bold" fill="#3b3b3b" textLength="77.76" lengthAdjust="spacingAndGlyphs" >Amount</text>
<polyline points="1101.3000000000002,754.5 1106.15,749.8 1111.0,754.5" fill="none" stroke="#f7892f" stroke-width="1.9" stroke-linecap="round"/>
<polyline points="1101.3000000000002,759.5 1106.15,754.8 1111.0,759.5" fill="none" stroke="#f7892f" stroke-width="1.9" stroke-linecap="round"/>
<text x="1112.70" y="761.70" font-size="17.86" font-weight="normal" fill="#333" textLength="9.93" lengthAdjust="spacingAndGlyphs">3</text>
<polyline points="1272.3000000000002,754.5 1277.15,749.8 1282.0,754.5" fill="none" stroke="#f7892f" stroke-width="1.9" stroke-linecap="round"/>
<polyline points="1272.3000000000002,759.5 1277.15,754.8 1282.0,759.5" fill="none" stroke="#f7892f" stroke-width="1.9" stroke-linecap="round"/>
<text x="1283.98" y="761.70" font-size="17.86" font-weight="normal" fill="#333" textLength="9.93" lengthAdjust="spacingAndGlyphs">2</text>
<polyline points="1549.6000000000001,754.5 1554.45,749.8 1559.3,754.5" fill="none" stroke="#f7892f" stroke-width="1.9" stroke-linecap="round"/>
<polyline points="1549.6000000000001,759.5 1554.45,754.8 1559.3,759.5" fill="none" stroke="#f7892f" stroke-width="1.9" stroke-linecap="round"/>
<text x="1558.79" y="761.70" font-size="17.86" font-weight="normal" fill="#333" textLength="9.93" lengthAdjust="spacingAndGlyphs">1</text>
<polygon points="865.4,790.8 865.4,804.2 851,804.2" fill="#333"/>
<text x="880.37" y="808.00" font-size="25.29" font-weight="bold" fill="#111" textLength="126.52" lengthAdjust="spacingAndGlyphs" >2023-2024</text>
<text x="1025.76" y="808.00" font-size="23.14" font-weight="normal" fill="#999" textLength="99.57" lengthAdjust="spacingAndGlyphs" >(2 records)</text>
<line x1="922.5" y1="826" x2="922.5" y2="877" stroke="#c6c6c6" stroke-width="1" stroke-dasharray="1,1"/>
<line x1="1131.5" y1="826" x2="1131.5" y2="877" stroke="#c6c6c6" stroke-width="1" stroke-dasharray="1,1"/>
<line x1="1302.5" y1="826" x2="1302.5" y2="877" stroke="#c6c6c6" stroke-width="1" stroke-dasharray="1,1"/>
<line x1="1579.5" y1="826" x2="1579.5" y2="877" stroke="#c6c6c6" stroke-width="1" stroke-dasharray="1,1"/>
<line x1="1751.5" y1="826" x2="1751.5" y2="877" stroke="#c6c6c6" stroke-width="1" stroke-dasharray="1,1"/>
<line x1="1889.5" y1="826" x2="1889.5" y2="877" stroke="#c6c6c6" stroke-width="1" stroke-dasharray="1,1"/>
<line x1="2027.5" y1="826" x2="2027.5" y2="877" stroke="#c6c6c6" stroke-width="1" stroke-dasharray="1,1"/>
<line x1="2099.5" y1="826" x2="2099.5" y2="877" stroke="#c6c6c6" stroke-width="1" stroke-dasharray="1,1"/>
<line x1="2171.5" y1="826" x2="2171.5" y2="877" stroke="#c6c6c6" stroke-width="1" stroke-dasharray="1,1"/>
<text x="932.15" y="859.30" font-size="23.04" font-weight="normal" fill="#111" textLength="67.32" lengthAdjust="spacingAndGlyphs" >Tuition</text>
<text x="1139.97" y="859.30" font-size="21.43" font-weight="normal" fill="#111" textLength="98.29" lengthAdjust="spacingAndGlyphs" >2023-2024</text>
<text x="1678.38" y="859.30" font-size="21.43" font-weight="normal" fill="#111" textLength="62.30" lengthAdjust="spacingAndGlyphs" >200.00</text>
<text x="1839.79" y="859.30" font-size="21.43" font-weight="normal" fill="#111" textLength="39.55" lengthAdjust="spacingAndGlyphs" >0.00</text>
<text x="1978.39" y="859.30" font-size="21.43" font-weight="normal" fill="#111" textLength="39.55" lengthAdjust="spacingAndGlyphs" >0.00</text>
<path d="M2065.6,841.1 L2054.4,841.1 Q2050.8,841.1 2050.8,844.7 L2050.8,857.1999999999999 Q2050.8,860.8 2054.4,860.8 L2067.0,860.8 Q2070.6,860.8 2070.6,857.1999999999999 L2070.6,852.1" fill="none" stroke="#0a7bdc" stroke-width="2.1" stroke-linecap="round"/>
<line x1="2061.6" y1="854" x2="2073.8" y2="842" stroke="#0a7bdc" stroke-width="3" stroke-linecap="square"/>
<polygon points="2068.2,838.3 2076.9,838.3 2076.9,847.4" fill="#0a7bdc" stroke="#0a7bdc" stroke-width="0.8" stroke-linejoin="round"/>
<path d="M2128.4,843.8 L2142.7999999999997,858.2 M2142.7999999999997,843.8 L2128.4,858.2" stroke="#c1312e" stroke-width="6.2" stroke-linecap="butt"/>
<line x1="922.5" y1="878" x2="922.5" y2="929" stroke="#c6c6c6" stroke-width="1" stroke-dasharray="1,1"/>
<line x1="1131.5" y1="878" x2="1131.5" y2="929" stroke="#c6c6c6" stroke-width="1" stroke-dasharray="1,1"/>
<line x1="1302.5" y1="878" x2="1302.5" y2="929" stroke="#c6c6c6" stroke-width="1" stroke-dasharray="1,1"/>
<line x1="1579.5" y1="878" x2="1579.5" y2="929" stroke="#c6c6c6" stroke-width="1" stroke-dasharray="1,1"/>
<line x1="1751.5" y1="878" x2="1751.5" y2="929" stroke="#c6c6c6" stroke-width="1" stroke-dasharray="1,1"/>
<line x1="1889.5" y1="878" x2="1889.5" y2="929" stroke="#c6c6c6" stroke-width="1" stroke-dasharray="1,1"/>
<line x1="2027.5" y1="878" x2="2027.5" y2="929" stroke="#c6c6c6" stroke-width="1" stroke-dasharray="1,1"/>
<line x1="2099.5" y1="878" x2="2099.5" y2="929" stroke="#c6c6c6" stroke-width="1" stroke-dasharray="1,1"/>
<line x1="2171.5" y1="878" x2="2171.5" y2="929" stroke="#c6c6c6" stroke-width="1" stroke-dasharray="1,1"/>
<text x="930.60" y="911.30" font-size="23.04" font-weight="normal" fill="#111" textLength="106.20" lengthAdjust="spacingAndGlyphs" >Incidentals</text>
<text x="1139.97" y="911.30" font-size="21.43" font-weight="normal" fill="#111" textLength="98.29" lengthAdjust="spacingAndGlyphs" >2023-2024</text>
<text x="1701.19" y="911.30" font-size="21.43" font-weight="normal" fill="#111" textLength="39.55" lengthAdjust="spacingAndGlyphs" >0.00</text>
<text x="1839.79" y="911.30" font-size="21.43" font-weight="normal" fill="#111" textLength="39.55" lengthAdjust="spacingAndGlyphs" >0.00</text>
<text x="1978.39" y="911.30" font-size="21.43" font-weight="normal" fill="#111" textLength="39.55" lengthAdjust="spacingAndGlyphs" >0.00</text>
<path d="M2065.6,893.1 L2054.4,893.1 Q2050.8,893.1 2050.8,896.7 L2050.8,909.1999999999999 Q2050.8,912.8 2054.4,912.8 L2067.0,912.8 Q2070.6,912.8 2070.6,909.1999999999999 L2070.6,904.1" fill="none" stroke="#0a7bdc" stroke-width="2.1" stroke-linecap="round"/>
<line x1="2061.6" y1="906" x2="2073.8" y2="894" stroke="#0a7bdc" stroke-width="3" stroke-linecap="square"/>
<polygon points="2068.2,890.3 2076.9,890.3 2076.9,899.4" fill="#0a7bdc" stroke="#0a7bdc" stroke-width="0.8" stroke-linejoin="round"/>
<path d="M2128.4,895.8 L2142.7999999999997,910.2 M2142.7999999999997,895.8 L2128.4,910.2" stroke="#c1312e" stroke-width="6.2" stroke-linecap="butt"/>
<line x1="922.5" y1="930" x2="922.5" y2="981" stroke="#d2cbb7" stroke-width="1" stroke-dasharray="1,1"/>
<line x1="1131.5" y1="930" x2="1131.5" y2="981" stroke="#d2cbb7" stroke-width="1" stroke-dasharray="1,1"/>
<line x1="1302.5" y1="930" x2="1302.5" y2="981" stroke="#d2cbb7" stroke-width="1" stroke-dasharray="1,1"/>
<line x1="1579.5" y1="930" x2="1579.5" y2="981" stroke="#d2cbb7" stroke-width="1" stroke-dasharray="1,1"/>
<line x1="1751.5" y1="930" x2="1751.5" y2="981" stroke="#d2cbb7" stroke-width="1" stroke-dasharray="1,1"/>
<line x1="1889.5" y1="930" x2="1889.5" y2="981" stroke="#d2cbb7" stroke-width="1" stroke-dasharray="1,1"/>
<line x1="2027.5" y1="930" x2="2027.5" y2="981" stroke="#d2cbb7" stroke-width="1" stroke-dasharray="1,1"/>
<line x1="2099.5" y1="930" x2="2099.5" y2="981" stroke="#d2cbb7" stroke-width="1" stroke-dasharray="1,1"/>
<line x1="2171.5" y1="930" x2="2171.5" y2="981" stroke="#d2cbb7" stroke-width="1" stroke-dasharray="1,1"/>
<text x="869.41" y="963.00" font-size="21.74" font-weight="bold" fill="#111" textLength="43.71" lengthAdjust="spacingAndGlyphs" >SUM</text>
<text x="1676.26" y="963.00" font-size="21.00" font-weight="bold" fill="#111" textLength="64.55" lengthAdjust="spacingAndGlyphs" >200.00</text>
<text x="1838.46" y="963.00" font-size="21.00" font-weight="bold" fill="#111" textLength="41.01" lengthAdjust="spacingAndGlyphs" >0.00</text>
<text x="1977.06" y="963.00" font-size="21.00" font-weight="bold" fill="#111" textLength="41.01" lengthAdjust="spacingAndGlyphs" >0.00</text>
<polygon points="865.4,998.8 865.4,1012.2 851,1012.2" fill="#333"/>
<text x="880.37" y="1016.00" font-size="25.29" font-weight="bold" fill="#111" textLength="127.33" lengthAdjust="spacingAndGlyphs" >2022-2023</text>
<text x="1025.76" y="1016.00" font-size="23.14" font-weight="normal" fill="#999" textLength="99.57" lengthAdjust="spacingAndGlyphs" >(2 records)</text>
<line x1="922.5" y1="1035" x2="922.5" y2="1086" stroke="#c6c6c6" stroke-width="1" stroke-dasharray="1,1"/>
<line x1="1131.5" y1="1035" x2="1131.5" y2="1086" stroke="#c6c6c6" stroke-width="1" stroke-dasharray="1,1"/>
<line x1="1302.5" y1="1035" x2="1302.5" y2="1086" stroke="#c6c6c6" stroke-width="1" stroke-dasharray="1,1"/>
<line x1="1579.5" y1="1035" x2="1579.5" y2="1086" stroke="#c6c6c6" stroke-width="1" stroke-dasharray="1,1"/>
<line x1="1751.5" y1="1035" x2="1751.5" y2="1086" stroke="#c6c6c6" stroke-width="1" stroke-dasharray="1,1"/>
<line x1="1889.5" y1="1035" x2="1889.5" y2="1086" stroke="#c6c6c6" stroke-width="1" stroke-dasharray="1,1"/>
<line x1="2027.5" y1="1035" x2="2027.5" y2="1086" stroke="#c6c6c6" stroke-width="1" stroke-dasharray="1,1"/>
<line x1="2099.5" y1="1035" x2="2099.5" y2="1086" stroke="#c6c6c6" stroke-width="1" stroke-dasharray="1,1"/>
<line x1="2171.5" y1="1035" x2="2171.5" y2="1086" stroke="#c6c6c6" stroke-width="1" stroke-dasharray="1,1"/>
<text x="932.15" y="1068.30" font-size="23.04" font-weight="normal" fill="#111" textLength="67.32" lengthAdjust="spacingAndGlyphs" >Tuition</text>
<text x="1139.97" y="1068.30" font-size="21.43" font-weight="normal" fill="#111" textLength="98.50" lengthAdjust="spacingAndGlyphs" >2022-2023</text>
<text x="1701.19" y="1068.30" font-size="21.43" font-weight="normal" fill="#111" textLength="39.55" lengthAdjust="spacingAndGlyphs" >0.00</text>
<text x="1839.79" y="1068.30" font-size="21.43" font-weight="normal" fill="#111" textLength="39.55" lengthAdjust="spacingAndGlyphs" >0.00</text>
<text x="1978.39" y="1068.30" font-size="21.43" font-weight="normal" fill="#111" textLength="39.55" lengthAdjust="spacingAndGlyphs" >0.00</text>
<path d="M2065.6,1050.1 L2054.4,1050.1 Q2050.8,1050.1 2050.8,1053.6999999999998 L2050.8,1066.2 Q2050.8,1069.8 2054.4,1069.8 L2067.0,1069.8 Q2070.6,1069.8 2070.6,1066.2 L2070.6,1061.1" fill="none" stroke="#0a7bdc" stroke-width="2.1" stroke-linecap="round"/>
<line x1="2061.6" y1="1063" x2="2073.8" y2="1051" stroke="#0a7bdc" stroke-width="3" stroke-linecap="square"/>
<polygon points="2068.2,1047.3 2076.9,1047.3 2076.9,1056.4" fill="#0a7bdc" stroke="#0a7bdc" stroke-width="0.8" stroke-linejoin="round"/>
<path d="M2128.4,1052.8 L2142.7999999999997,1067.2 M2142.7999999999997,1052.8 L2128.4,1067.2" stroke="#c1312e" stroke-width="6.2" stroke-linecap="butt"/>
<line x1="922.5" y1="1087" x2="922.5" y2="1138" stroke="#c6c6c6" stroke-width="1" stroke-dasharray="1,1"/>
<line x1="1131.5" y1="1087" x2="1131.5" y2="1138" stroke="#c6c6c6" stroke-width="1" stroke-dasharray="1,1"/>
<line x1="1302.5" y1="1087" x2="1302.5" y2="1138" stroke="#c6c6c6" stroke-width="1" stroke-dasharray="1,1"/>
<line x1="1579.5" y1="1087" x2="1579.5" y2="1138" stroke="#c6c6c6" stroke-width="1" stroke-dasharray="1,1"/>
<line x1="1751.5" y1="1087" x2="1751.5" y2="1138" stroke="#c6c6c6" stroke-width="1" stroke-dasharray="1,1"/>
<line x1="1889.5" y1="1087" x2="1889.5" y2="1138" stroke="#c6c6c6" stroke-width="1" stroke-dasharray="1,1"/>
<line x1="2027.5" y1="1087" x2="2027.5" y2="1138" stroke="#c6c6c6" stroke-width="1" stroke-dasharray="1,1"/>
<line x1="2099.5" y1="1087" x2="2099.5" y2="1138" stroke="#c6c6c6" stroke-width="1" stroke-dasharray="1,1"/>
<line x1="2171.5" y1="1087" x2="2171.5" y2="1138" stroke="#c6c6c6" stroke-width="1" stroke-dasharray="1,1"/>
<text x="930.60" y="1120.30" font-size="23.04" font-weight="normal" fill="#111" textLength="106.20" lengthAdjust="spacingAndGlyphs" >Incidentals</text>
<text x="1139.97" y="1120.30" font-size="21.43" font-weight="normal" fill="#111" textLength="98.50" lengthAdjust="spacingAndGlyphs" >2022-2023</text>
<text x="1701.19" y="1120.30" font-size="21.43" font-weight="normal" fill="#111" textLength="39.55" lengthAdjust="spacingAndGlyphs" >0.00</text>
<text x="1839.79" y="1120.30" font-size="21.43" font-weight="normal" fill="#111" textLength="39.55" lengthAdjust="spacingAndGlyphs" >0.00</text>
<text x="1978.39" y="1120.30" font-size="21.43" font-weight="normal" fill="#111" textLength="39.55" lengthAdjust="spacingAndGlyphs" >0.00</text>
<path d="M2065.6,1102.1 L2054.4,1102.1 Q2050.8,1102.1 2050.8,1105.6999999999998 L2050.8,1118.2 Q2050.8,1121.8 2054.4,1121.8 L2067.0,1121.8 Q2070.6,1121.8 2070.6,1118.2 L2070.6,1113.1" fill="none" stroke="#0a7bdc" stroke-width="2.1" stroke-linecap="round"/>
<line x1="2061.6" y1="1115" x2="2073.8" y2="1103" stroke="#0a7bdc" stroke-width="3" stroke-linecap="square"/>
<polygon points="2068.2,1099.3 2076.9,1099.3 2076.9,1108.4" fill="#0a7bdc" stroke="#0a7bdc" stroke-width="0.8" stroke-linejoin="round"/>
<path d="M2128.4,1104.8 L2142.7999999999997,1119.2 M2142.7999999999997,1104.8 L2128.4,1119.2" stroke="#c1312e" stroke-width="6.2" stroke-linecap="butt"/>
<line x1="922.5" y1="1139" x2="922.5" y2="1190" stroke="#d2cbb7" stroke-width="1" stroke-dasharray="1,1"/>
<line x1="1131.5" y1="1139" x2="1131.5" y2="1190" stroke="#d2cbb7" stroke-width="1" stroke-dasharray="1,1"/>
<line x1="1302.5" y1="1139" x2="1302.5" y2="1190" stroke="#d2cbb7" stroke-width="1" stroke-dasharray="1,1"/>
<line x1="1579.5" y1="1139" x2="1579.5" y2="1190" stroke="#d2cbb7" stroke-width="1" stroke-dasharray="1,1"/>
<line x1="1751.5" y1="1139" x2="1751.5" y2="1190" stroke="#d2cbb7" stroke-width="1" stroke-dasharray="1,1"/>
<line x1="1889.5" y1="1139" x2="1889.5" y2="1190" stroke="#d2cbb7" stroke-width="1" stroke-dasharray="1,1"/>
<line x1="2027.5" y1="1139" x2="2027.5" y2="1190" stroke="#d2cbb7" stroke-width="1" stroke-dasharray="1,1"/>
<line x1="2099.5" y1="1139" x2="2099.5" y2="1190" stroke="#d2cbb7" stroke-width="1" stroke-dasharray="1,1"/>
<line x1="2171.5" y1="1139" x2="2171.5" y2="1190" stroke="#d2cbb7" stroke-width="1" stroke-dasharray="1,1"/>
<text x="869.41" y="1172.00" font-size="21.74" font-weight="bold" fill="#111" textLength="43.71" lengthAdjust="spacingAndGlyphs" >SUM</text>
<text x="1699.86" y="1172.00" font-size="21.00" font-weight="bold" fill="#111" textLength="41.01" lengthAdjust="spacingAndGlyphs" >0.00</text>
<text x="1838.46" y="1172.00" font-size="21.00" font-weight="bold" fill="#111" textLength="41.01" lengthAdjust="spacingAndGlyphs" >0.00</text>
<text x="1977.06" y="1172.00" font-size="21.00" font-weight="bold" fill="#111" textLength="41.01" lengthAdjust="spacingAndGlyphs" >0.00</text>
<line x1="922.5" y1="1244" x2="922.5" y2="1296" stroke="#d2cbb7" stroke-width="1" stroke-dasharray="1,1"/>
<line x1="1131.5" y1="1244" x2="1131.5" y2="1296" stroke="#d2cbb7" stroke-width="1" stroke-dasharray="1,1"/>
<line x1="1302.5" y1="1244" x2="1302.5" y2="1296" stroke="#d2cbb7" stroke-width="1" stroke-dasharray="1,1"/>
<line x1="1579.5" y1="1244" x2="1579.5" y2="1296" stroke="#d2cbb7" stroke-width="1" stroke-dasharray="1,1"/>
<line x1="1751.5" y1="1244" x2="1751.5" y2="1296" stroke="#d2cbb7" stroke-width="1" stroke-dasharray="1,1"/>
<line x1="1889.5" y1="1244" x2="1889.5" y2="1296" stroke="#d2cbb7" stroke-width="1" stroke-dasharray="1,1"/>
<line x1="2027.5" y1="1244" x2="2027.5" y2="1296" stroke="#d2cbb7" stroke-width="1" stroke-dasharray="1,1"/>
<line x1="2099.5" y1="1244" x2="2099.5" y2="1296" stroke="#d2cbb7" stroke-width="1" stroke-dasharray="1,1"/>
<line x1="2171.5" y1="1244" x2="2171.5" y2="1296" stroke="#d2cbb7" stroke-width="1" stroke-dasharray="1,1"/>
<text x="869.41" y="1277.00" font-size="21.74" font-weight="bold" fill="#111" textLength="43.71" lengthAdjust="spacingAndGlyphs" >SUM</text>
<text x="1676.26" y="1277.00" font-size="21.00" font-weight="bold" fill="#111" textLength="64.55" lengthAdjust="spacingAndGlyphs" >200.00</text>
<text x="1838.46" y="1277.00" font-size="21.00" font-weight="bold" fill="#111" textLength="41.01" lengthAdjust="spacingAndGlyphs" >0.00</text>
<text x="1977.06" y="1277.00" font-size="21.00" font-weight="bold" fill="#111" textLength="41.01" lengthAdjust="spacingAndGlyphs" >0.00</text>
<text x="2589.18" y="1323.60" font-size="21.43" font-weight="normal" fill="#111" textLength="87.32" lengthAdjust="spacingAndGlyphs" >4 records</text>
<line x1="2559.4" y1="1307.5" x2="2559.4" y2="1325.5" stroke="#666" stroke-width="1.6"/>
<circle cx="2559.4" cy="1307.6" r="1.5" fill="#666"/>
<path d="M2561.3,1310.3 C2563.5,1308.7 2565.5,1308.1 2567.3,1308.1 C2569.5,1308.1 2571.5,1310 2573.3,1310 C2575.5,1310 2577.5,1308.5 2579.5,1308.1 L2579.5,1318.1 C2577.5,1318.5 2575.5,1320 2573.3,1320 C2571.5,1320 2569.5,1318.1 2567.3,1318.1 C2565.5,1318.1 2563.5,1318.7 2561.3,1320.3 Z" fill="#fff" stroke="#666" stroke-width="1.5" stroke-linejoin="round"/>
<path d="M2567.3,1308.10 L2573.3,1310.00 L2573.3,1313.33 L2567.3,1311.43 Z M2561.3,1313.63 L2567.3,1311.43 L2567.3,1314.77 L2561.3,1316.97 Z M2573.3,1313.33 L2579.5,1311.43 L2579.5,1314.77 L2573.3,1316.67 Z M2567.3,1314.77 L2573.3,1316.67 L2573.3,1320.00 L2567.3,1318.10 Z" fill="#666"/>
<line x1="805.60" y1="860.00" x2="805.60" y2="842.00" stroke="#fdd05a" stroke-width="6" stroke-linecap="round"/>
<line x1="797.81" y1="855.50" x2="813.39" y2="846.50" stroke="#fdd05a" stroke-width="6" stroke-linecap="round"/>
<line x1="813.39" y1="855.50" x2="797.81" y2="846.50" stroke="#fdd05a" stroke-width="6" stroke-linecap="round"/>
<polygon points="1580,826 1598,826 1580,844" fill="#f9c94e"/>
<rect x="1752" y="827" width="136" height="49" fill="none" stroke="#3d7fe3" stroke-width="2"/>
</svg>
<div class="a" style="left:1558px;top:802px;width:224px;height:85px;border:10px solid #fd5a4a;filter:drop-shadow(0.5px 4px 2px rgba(0,0,0,0.62));"></div>
</body></html>
